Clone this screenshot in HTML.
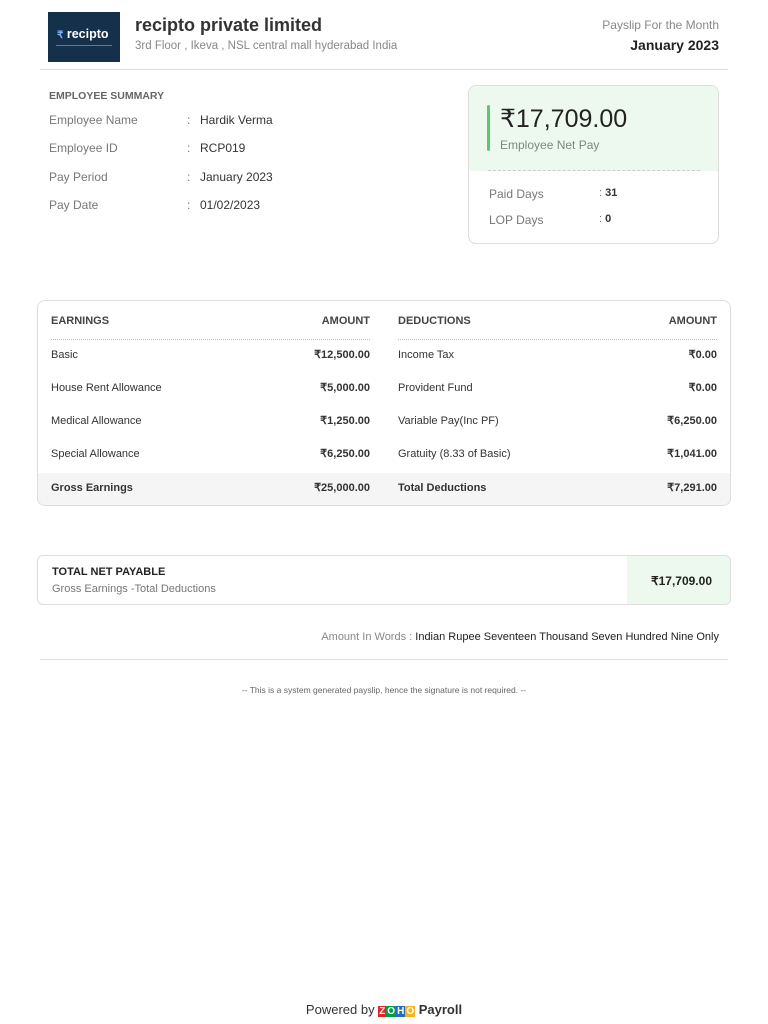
<!DOCTYPE html>
<html><head><meta charset="utf-8"><style>
*{margin:0;padding:0;box-sizing:border-box}
body{width:768px;height:1024px;background:#fff;font-family:"Liberation Sans",sans-serif;color:#333;position:relative;overflow:hidden}
.a{position:absolute;white-space:nowrap;line-height:1.2}
.g{color:#888}
.lbl{font-size:12px;color:#777}
.row{font-size:11px;color:#333}
.b{font-weight:bold}
</style></head><body>
<div class="a" style="left:48px;top:12px;width:72px;height:50px;background:#15304a">
 <div class="a" style="left:9px;top:15px;color:#fff;font-weight:bold;font-size:12.5px"><span style="color:#7fb0ff;font-size:10px">₹</span> recipto</div>
 <div class="a" style="left:8px;top:33px;width:56px;height:1px;background:#3d8f8a"></div>
</div>
<div class="a b" style="left:135px;top:15px;font-size:18px;color:#333">recipto private limited</div>
<div class="a g" style="left:135px;top:40px;font-size:11.5px">3rd Floor , Ikeva , NSL central mall hyderabad India</div>
<div class="a g" style="right:49px;top:18px;font-size:12px">Payslip For the Month</div>
<div class="a b" style="right:49px;top:37px;font-size:14px;color:#222">January 2023</div>
<div class="a" style="left:40px;top:69px;width:688px;height:1px;background:#ddd"></div>

<div class="a b" style="left:49px;top:90px;font-size:10.5px;color:#666">EMPLOYEE SUMMARY</div>
<div class="a lbl" style="left:49px;top:113px">Employee Name</div><div class="a lbl" style="left:187px;top:113px">:</div><div class="a row" style="left:200px;top:113px;font-size:12px">Hardik Verma</div>
<div class="a lbl" style="left:49px;top:141px">Employee ID</div><div class="a lbl" style="left:187px;top:141px">:</div><div class="a row" style="left:200px;top:141px;font-size:12px">RCP019</div>
<div class="a lbl" style="left:49px;top:170px">Pay Period</div><div class="a lbl" style="left:187px;top:170px">:</div><div class="a row" style="left:200px;top:170px;font-size:12px">January 2023</div>
<div class="a lbl" style="left:49px;top:198px">Pay Date</div><div class="a lbl" style="left:187px;top:198px">:</div><div class="a row" style="left:200px;top:198px;font-size:12px">01/02/2023</div>

<div class="a" style="left:468px;top:85px;width:251px;height:159px;border:1px solid #ddd;border-radius:8px;overflow:hidden">
 <div class="a" style="left:0;top:0;width:251px;height:85px;background:#edf9ef"></div>
 <div class="a" style="left:19px;top:84px;width:212px;border-top:1px dashed #ccc"></div>
 <div class="a" style="left:18px;top:19px;width:3px;height:46px;background:#5cc86b;border-radius:2px"></div>
 <div class="a" style="left:31px;top:18px;font-size:25px;color:#222">₹17,709.00</div>
 <div class="a" style="left:31px;top:52px;font-size:12px;color:#7a8a7c">Employee Net Pay</div>
 <div class="a lbl" style="left:20px;top:101px">Paid Days</div><div class="a b" style="left:130px;top:101px;font-size:11px;color:#333"><span style="font-weight:normal;color:#777">: </span>31</div>
 <div class="a lbl" style="left:20px;top:127px">LOP Days</div><div class="a b" style="left:130px;top:127px;font-size:11px;color:#333"><span style="font-weight:normal;color:#777">: </span>0</div>
</div>

<div class="a" style="left:37px;top:300px;width:694px;height:206px;border:1px solid #ddd;border-radius:8px;overflow:hidden">
 <div class="a" style="left:0;top:172px;width:694px;height:34px;background:#f5f5f5"></div>
 <div class="a" style="left:13px;top:38px;width:319px;border-top:1px dotted #bbb"></div>
 <div class="a" style="left:360px;top:38px;width:319px;border-top:1px dotted #bbb"></div>
</div>
<div class="a b" style="left:51px;top:315px;font-size:11px;color:#444">EARNINGS</div><div class="a b" style="right:398px;top:315px;font-size:11px;color:#444">AMOUNT</div>
<div class="a b" style="left:398px;top:315px;font-size:11px;color:#444">DEDUCTIONS</div><div class="a b" style="right:51px;top:315px;font-size:11px;color:#444">AMOUNT</div>

<div class="a row" style="left:51px;top:349px">Basic</div><div class="a row b" style="right:398px;top:349px">₹12,500.00</div>
<div class="a row" style="left:398px;top:349px">Income Tax</div><div class="a row b" style="right:51px;top:349px">₹0.00</div>
<div class="a row" style="left:51px;top:382px">House Rent Allowance</div><div class="a row b" style="right:398px;top:382px">₹5,000.00</div>
<div class="a row" style="left:398px;top:382px">Provident Fund</div><div class="a row b" style="right:51px;top:382px">₹0.00</div>
<div class="a row" style="left:51px;top:415px">Medical Allowance</div><div class="a row b" style="right:398px;top:415px">₹1,250.00</div>
<div class="a row" style="left:398px;top:415px">Variable Pay(Inc PF)</div><div class="a row b" style="right:51px;top:415px">₹6,250.00</div>
<div class="a row" style="left:51px;top:448px">Special Allowance</div><div class="a row b" style="right:398px;top:448px">₹6,250.00</div>
<div class="a row" style="left:398px;top:448px">Gratuity (8.33 of Basic)</div><div class="a row b" style="right:51px;top:448px">₹1,041.00</div>
<div class="a row b" style="left:51px;top:482px">Gross Earnings</div><div class="a row b" style="right:398px;top:482px">₹25,000.00</div>
<div class="a row b" style="left:398px;top:482px">Total Deductions</div><div class="a row b" style="right:51px;top:482px">₹7,291.00</div>

<div class="a" style="left:37px;top:555px;width:694px;height:50px;border:1px solid #ddd;border-radius:6px;overflow:hidden">
 <div class="a" style="left:589px;top:0;width:105px;height:50px;background:#edf9ef"></div>
 <div class="a b" style="left:14px;top:10px;font-size:11px;color:#222">TOTAL NET PAYABLE</div>
 <div class="a" style="left:14px;top:27px;font-size:11px;color:#777">Gross Earnings -Total Deductions</div>
 <div class="a b" style="right:18px;top:18px;font-size:12px;color:#222">₹17,709.00</div>
</div>

<div class="a" style="right:49px;top:631px;font-size:11px;color:#222"><span style="color:#888">Amount In Words : </span>Indian Rupee Seventeen Thousand Seven Hundred Nine Only</div>
<div class="a" style="left:40px;top:659px;width:688px;height:1px;background:#ddd"></div>
<div class="a" style="left:0;width:768px;text-align:center;top:685px;font-size:8.5px;color:#666">-- This is a system generated payslip, hence the signature is not required. --</div>

<div class="a" style="left:0;width:768px;text-align:center;top:1002px;font-size:13px;color:#333">Powered by <span style="font-size:10px;font-weight:bold;color:#fff"><span style="background:#e42527;padding:0 1px">Z</span><span style="background:#089949;padding:0 1px">O</span><span style="background:#226db4;padding:0 1px">H</span><span style="background:#f9b21d;padding:0 1px">O</span></span> <b>Payroll</b></div>
</body></html>
